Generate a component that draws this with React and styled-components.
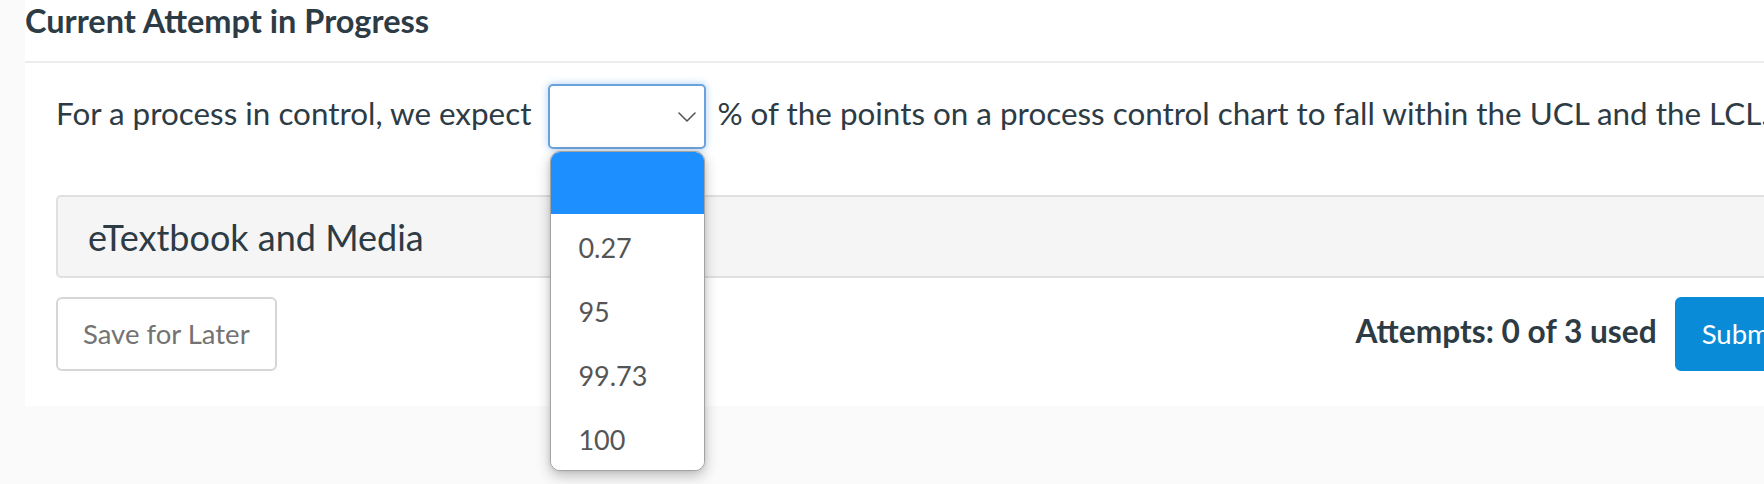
import React from "react";
import styled, { createGlobalStyle } from "styled-components";

const GlobalStyle = createGlobalStyle`
  html { overflow: hidden; background: #fafafa; }
  body { margin: 0; padding: 0; background: #fafafa; font-family: Lato, "Open Sans", sans-serif; color: #2d3b45; }
`;

const Page = styled.div`
  padding-left: 25px;
  width: 1917px;
  min-height: 484px;
`;

const Card = styled.section`
  background: #ffffff;
  width: 1917px;
  padding-bottom: 35px;
`;

const Header = styled.div`
  padding: 1px 0 21px 0;
  border-bottom: 2px solid #ececec;
`;

const Title = styled.h2`
  margin: 0;
  font-size: 32.5px;
  line-height: 39px;
  font-weight: 700;
  color: #2d3b45;
`;

const Body = styled.div`
  padding: 21px 31px 0 31px;
`;

const QuestionRow = styled.div`
  display: flex;
  align-items: center;
  white-space: nowrap;
  font-size: 31.4px;
  color: #2d3b45;
`;

const QText = styled.span`
  line-height: 38px;
  padding-bottom: 7px;
`;

const SelectWrap = styled.div`
  position: relative;
  margin: 0 11px 0 17px;
`;

const SelectBox = styled.div`
  box-sizing: border-box;
  width: 158px;
  height: 65px;
  border: 2px solid #6aa3dc;
  border-radius: 5px;
  background: #fff;
  box-shadow: 0 0 7px 1px rgba(110, 170, 235, 0.45);
  display: flex;
  align-items: center;
  justify-content: flex-end;
  padding-right: 8px;
`;

const Chevron = () => (
  <svg width="18" height="10" viewBox="0 0 18 10" fill="none">
    <path d="M1 1 L9 9 L17 1" stroke="#555" strokeWidth="1.6" strokeLinecap="round" strokeLinejoin="round" />
  </svg>
);

const OptionList = styled.ul`
  position: absolute;
  left: 2px;
  top: 67px;
  width: 155px;
  box-sizing: border-box;
  margin: 0;
  padding: 0;
  list-style: none;
  background: #fff;
  border: 1px solid #a3a3a3;
  border-radius: 10px;
  overflow: hidden;
  box-shadow: 0 5px 14px rgba(0, 0, 0, 0.24), 0 0 5px rgba(0, 0, 0, 0.1);
  z-index: 5;
`;

const Option = styled.li`
  box-sizing: border-box;
  height: ${p => (p.$first ? 62 : 64)}px;
  padding: 3px 0 0 27px;
  display: flex;
  align-items: center;
  font-size: 27px;
  line-height: 32px;
  color: #555555;
  background: ${p => (p.$selected ? "#1e8fff" : "#fff")};
`;

const MediaPanel = styled.div`
  box-sizing: border-box;
  margin-top: 46px;
  height: 83px;
  border: 2px solid #e0e0e0;
  border-radius: 5px;
  background: #f5f5f5;
  display: flex;
  align-items: center;
  padding-left: 30px;
  font-size: 36px;
  color: #2d3b45;
`;

const Footer = styled.div`
  margin-top: 19px;
  display: flex;
  align-items: center;
  justify-content: space-between;
`;

const Button = styled.button`
  box-sizing: border-box;
  height: 74px;
  padding: 0 25px 2px 25px;
  border-radius: 6px;
  font-family: Lato, sans-serif;
  font-size: 27.5px;
  cursor: pointer;
  border: 2px solid ${p => (p.$primary ? "#0a8bd8" : "#d6d6d6")};
  background: ${p => (p.$primary ? "#0a8bd8" : "#ffffff")};
  color: ${p => (p.$primary ? "#ffffff" : "#737373")};
  white-space: nowrap;
`;

const RightGroup = styled.div`
  display: flex;
  align-items: center;
  gap: 18px;
`;

const Attempts = styled.span`
  font-size: 31.7px;
  font-weight: 700;
  color: #2d3b45;
  padding-bottom: 6px;
  white-space: nowrap;
`;

const options = ["", "0.27", "95", "99.73", "100"];

export default function App() {
  return (
    <Page>
      <GlobalStyle />
      <Card>
        <Header>
          <Title>Current Attempt in Progress</Title>
        </Header>
        <Body>
          <QuestionRow>
            <QText>For a process in control, we expect</QText>
            <SelectWrap>
              <SelectBox>
                <Chevron />
              </SelectBox>
              <OptionList>
                {options.map((o, i) => (
                  <Option key={i} $first={i === 0} $selected={i === 0}>
                    {o}
                  </Option>
                ))}
              </OptionList>
            </SelectWrap>
            <QText>% of the points on a process control chart to fall within the UCL and the LCL.</QText>
          </QuestionRow>
          <MediaPanel>eTextbook and Media</MediaPanel>
          <Footer>
            <Button>Save for Later</Button>
            <RightGroup>
              <Attempts>Attempts: 0 of 3 used</Attempts>
              <Button $primary>Submit Answer</Button>
            </RightGroup>
          </Footer>
        </Body>
      </Card>
    </Page>
  );
}
